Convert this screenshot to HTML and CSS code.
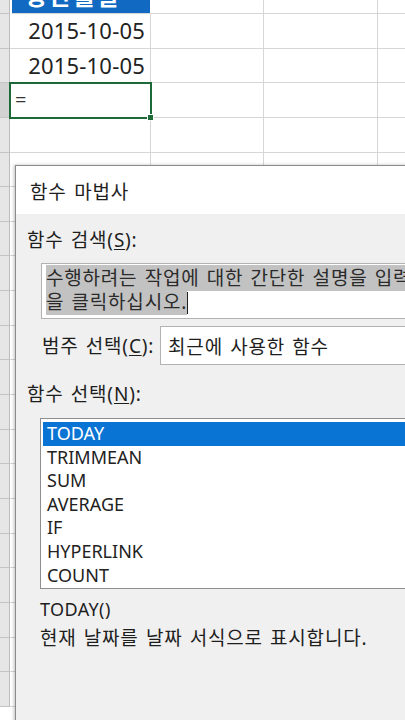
FILE: index.html
```html
<!DOCTYPE html>
<html lang="ko">
<head>
<meta charset="utf-8">
<link rel="stylesheet" href="styles.css">
</head>
<body>
<div class="screen">
  <div class="sheet">
    <div class="row row-top">
      <div class="rh"></div>
      <div class="cell a head"><span>생년월일</span></div>
      <div class="cell b"></div>
      <div class="cell c"></div>
      <div class="cell d"></div>
    </div>
    <div class="row"><div class="rh"></div><div class="cell a date">2015-10-05</div><div class="cell b"></div><div class="cell c"></div><div class="cell d"></div></div>
    <div class="row"><div class="rh"></div><div class="cell a date">2015-10-05</div><div class="cell b"></div><div class="cell c"></div><div class="cell d"></div></div>
    <div class="row"><div class="rh rh-active"></div><div class="cell a active">=<span class="handle"></span></div><div class="cell b"></div><div class="cell c"></div><div class="cell d"></div></div>
    <div class="row"><div class="rh"></div><div class="cell a"></div><div class="cell b"></div><div class="cell c"></div><div class="cell d"></div></div>
    <div class="row"><div class="rh"></div><div class="cell a"></div><div class="cell b"></div><div class="cell c"></div><div class="cell d"></div></div>
    <div class="row"><div class="rh"></div><div class="cell a"></div><div class="cell b"></div><div class="cell c"></div><div class="cell d"></div></div>
    <div class="row"><div class="rh"></div><div class="cell a"></div><div class="cell b"></div><div class="cell c"></div><div class="cell d"></div></div>
    <div class="row"><div class="rh"></div><div class="cell a"></div><div class="cell b"></div><div class="cell c"></div><div class="cell d"></div></div>
    <div class="row"><div class="rh"></div><div class="cell a"></div><div class="cell b"></div><div class="cell c"></div><div class="cell d"></div></div>
    <div class="row"><div class="rh"></div><div class="cell a"></div><div class="cell b"></div><div class="cell c"></div><div class="cell d"></div></div>
    <div class="row"><div class="rh"></div><div class="cell a"></div><div class="cell b"></div><div class="cell c"></div><div class="cell d"></div></div>
    <div class="row"><div class="rh"></div><div class="cell a"></div><div class="cell b"></div><div class="cell c"></div><div class="cell d"></div></div>
    <div class="row"><div class="rh"></div><div class="cell a"></div><div class="cell b"></div><div class="cell c"></div><div class="cell d"></div></div>
    <div class="row"><div class="rh"></div><div class="cell a"></div><div class="cell b"></div><div class="cell c"></div><div class="cell d"></div></div>
    <div class="row"><div class="rh"></div><div class="cell a"></div><div class="cell b"></div><div class="cell c"></div><div class="cell d"></div></div>
    <div class="row"><div class="rh"></div><div class="cell a"></div><div class="cell b"></div><div class="cell c"></div><div class="cell d"></div></div>
    <div class="row"><div class="rh"></div><div class="cell a"></div><div class="cell b"></div><div class="cell c"></div><div class="cell d"></div></div>
    <div class="row"><div class="rh"></div><div class="cell a"></div><div class="cell b"></div><div class="cell c"></div><div class="cell d"></div></div>
    <div class="row"><div class="rh"></div><div class="cell a"></div><div class="cell b"></div><div class="cell c"></div><div class="cell d"></div></div>
    <div class="row"><div class="rh"></div><div class="cell a"></div><div class="cell b"></div><div class="cell c"></div><div class="cell d"></div></div>
  </div>

  <div class="dialog">
    <div class="titlebar">함수 마법사</div>
    <div class="dbody">
      <div class="label lbl-search">함수 검색(<u>S</u>):</div>
      <div class="searchbox">
        <span class="sel">수행하려는 작업에 대한 간단한 설명을 입력한 다음 [검색]</span><br><span class="sel">을 클릭하십시오.</span><span class="caret"></span>
      </div>
      <div class="catrow">
        <div class="label">범주 선택(<u>C</u>):</div>
        <div class="combo">최근에 사용한 함수</div>
      </div>
      <div class="label lbl-func">함수 선택(<u>N</u>):</div>
      <div class="listbox">
        <div class="item selected">TODAY</div>
        <div class="item">TRIMMEAN</div>
        <div class="item">SUM</div>
        <div class="item">AVERAGE</div>
        <div class="item">IF</div>
        <div class="item">HYPERLINK</div>
        <div class="item">COUNT</div>
      </div>
      <div class="syntax">TODAY()</div>
      <div class="desc">현재 날짜를 날짜 서식으로 표시합니다.</div>
    </div>
  </div>
</div>
</body>
</html>
```

FILE: styles.css
```css
html, body {
  margin: 0;
  padding: 0;
}
body {
  width: 405px;
  height: 720px;
  overflow: hidden;
  background: #ffffff;
  font-family: "Noto Sans", "Noto Sans CJK KR", sans-serif;
  color: #1a1a1a;
}
.screen {
  position: relative;
  width: 405px;
  height: 720px;
  overflow: hidden;
}

/* spreadsheet */
.sheet {
  display: flex;
  flex-direction: column;
}
.row {
  display: flex;
  height: 34.65px;
  flex: none;
}
.row-top {
  height: 14px;
}
.rh {
  width: 10px;
  flex: none;
  background: #e6e6e6;
  border-right: 1px solid #bcbcbc;
  border-bottom: 1px solid #c4c4c4;
  box-sizing: border-box;
}
.rh-active {
  background: #d2d2d2;
}
.cell {
  box-sizing: border-box;
  border-right: 1px solid #d6d6d6;
  border-bottom: 1px solid #d6d6d6;
  flex: none;
  position: relative;
}
.cell.a { width: 141px; }
.cell.b { width: 113px; }
.cell.c { width: 114px; }
.cell.d { width: 60px; }

.head {
  background: #1269c2;
  overflow: hidden;
  margin-left: 2px;
  width: 139px !important;
  border-right: 1px solid #ffffff;
}
.head span {
  display: block;
  margin-top: -22px;
  padding-left: 12px;
  font-family: "Noto Sans CJK KR", sans-serif;
  font-weight: 700;
  font-size: 24px;
  line-height: 34px;
  color: #ffffff;
  letter-spacing: 2px;
}
.date {
  text-align: right;
  padding-right: 5px;
  font-size: 22px;
  line-height: 33px;
  color: #222222;
  letter-spacing: 0.2px;
}
.active {
  outline: 2px solid #1d6a39;
  outline-offset: -1px;
  font-size: 20px;
  line-height: 34px;
  padding-left: 5px;
  color: #333333;
  z-index: 1;
}
.handle {
  position: absolute;
  right: -4px;
  bottom: -4px;
  width: 5px;
  height: 5px;
  background: #1d6a39;
  border: 1px solid #ffffff;
}

/* dialog */
.dialog {
  position: absolute;
  left: 15px;
  top: 165px;
  width: 420px;
  height: 570px;
  background: #f0f0f0;
  border: 1px solid #8c8c8c;
  box-shadow: -1px 0 3px rgba(0,0,0,0.25);
  font-family: "Noto Sans", "Noto Sans CJK KR", sans-serif;
  color: #1e1e1e;
}
.titlebar {
  height: 48px;
  background: #ffffff;
  display: flex;
  align-items: center;
  padding-left: 14px;
  font-family: "Noto Sans CJK KR", sans-serif;
  font-size: 19px;
  letter-spacing: 0.8px;
  word-spacing: 1.5px;
}
.dbody {
  padding-left: 11px;
}
.label {
  font-size: 19px;
  line-height: 24px;
  letter-spacing: 0.8px;
  word-spacing: 1.5px;
  white-space: nowrap;
}
.label u {
  text-underline-offset: 2px;
}
.lbl-search {
  margin-top: 14px;
}
.searchbox {
  margin-top: 11px;
  margin-left: 14px;
  height: 56px;
  box-sizing: border-box;
  background: #ffffff;
  border: 1px solid #b2b2b2;
  padding: 2px 0 0 4px;
  font-size: 19px;
  line-height: 24px;
  letter-spacing: 0.8px;
  word-spacing: 1.5px;
  white-space: nowrap;
  overflow: hidden;
  color: #2a2a2a;
}
.sel {
  background: #c2c2c2;
}
.caret {
  display: inline-block;
  width: 1px;
  height: 22px;
  background: #222222;
  vertical-align: -5px;
}
.catrow {
  display: flex;
  align-items: center;
  margin-top: 7px;
  margin-left: 15px;
  gap: 6px;
}
.combo {
  flex: 1;
  height: 39px;
  box-sizing: border-box;
  background: #ffffff;
  border: 1px solid #b2b2b2;
  display: flex;
  align-items: center;
  padding-left: 7px;
  font-size: 19px;
  letter-spacing: 0.8px;
  word-spacing: 1.5px;
  white-space: nowrap;
}
.lbl-func {
  margin-top: 17px;
}
.listbox {
  margin-top: 12px;
  margin-left: 13px;
  height: 171px;
  box-sizing: border-box;
  background: #ffffff;
  border: 1px solid #8e8e8e;
  padding: 3px 0 0 2px;
}
.item {
  font-size: 18px;
  line-height: 23.6px;
  padding-left: 4px;
  color: #222222;
}
.item.selected {
  background: #0a74d4;
  color: #ffffff;
}
.syntax {
  margin-top: 8px;
  margin-left: 13px;
  font-size: 18px;
  line-height: 24px;
  letter-spacing: 0.4px;
}
.desc {
  margin-top: 5px;
  margin-left: 13px;
  font-size: 19px;
  line-height: 24px;
  letter-spacing: 0.8px;
  word-spacing: 1.5px;
  white-space: nowrap;
}
```
